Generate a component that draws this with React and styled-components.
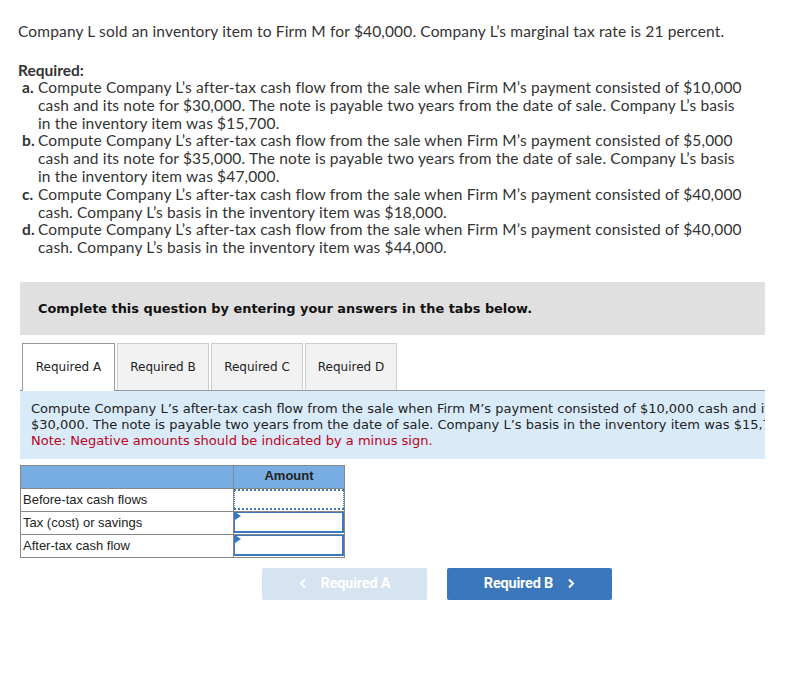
import React from 'react'
import styled, { createGlobalStyle } from 'styled-components'

const GlobalStyle = createGlobalStyle`
  html, body {
    margin: 0;
    padding: 0;
    background: #fff;
  }
  body {
    font-family: 'Lato', 'Open Sans', sans-serif;
    color: #333;
  }
`

const Page = styled.div`
  width: 801px;
  height: 690px;
  padding: 20px 36px 0 18px;
  box-sizing: border-box;
`

const Intro = styled.p`
  margin: 0 0 19px;
  font-size: 15.5px;
  letter-spacing: 0.15px;
  line-height: 22px;
  color: #333;
`

const ReqTitle = styled.div`
  font-size: 15.5px;
  font-weight: 700;
  line-height: 18px;
  color: #333;
`

const ReqList = styled.ol`
  list-style: none;
  margin: 0;
  padding: 0 14px 0 4px;
`

const ReqItem = styled.li`
  display: flex;
  font-size: 15.5px;
  letter-spacing: 0.15px;
  line-height: 17.8px;
  color: #333;
`

const ReqMark = styled.span`
  flex: none;
  width: 16px;
  font-weight: 700;
`

const Banner = styled.div`
  margin: 25px 0 8px 2px;
  height: 53px;
  background: #e0e0e0;
  display: flex;
  align-items: center;
  padding-left: 18px;
  font-family: 'DejaVu Sans', Verdana, sans-serif;
  font-size: 12.9px;
  font-weight: 700;
  color: #111;
`

const Tabs = styled.div`
  display: flex;
  gap: 2px;
  margin-left: 2px;
  padding-left: 2px;
  border-bottom: 1px solid #999;
  align-items: flex-end;
`

const Tab = styled.div`
  width: ${(p) => (p.$active ? 93 : 92)}px;
  height: ${(p) => (p.$active ? 48 : 47)}px;
  box-sizing: border-box;
  border: 1px solid ${(p) => (p.$active ? '#999' : '#ccc')};
  border-bottom: none;
  background: ${(p) => (p.$active ? '#fff' : '#f2f2f2')};
  margin-bottom: ${(p) => (p.$active ? '-1px' : '0')};
  display: flex;
  align-items: center;
  justify-content: center;
  font-family: 'DejaVu Sans', Verdana, sans-serif;
  font-size: 12px;
  color: #222;
`

const Instruction = styled.div`
  margin-left: 2px;
  background: #d9ebf9;
  padding: 10px 0 10px 11px;
  overflow: hidden;
  font-family: 'DejaVu Sans', Verdana, sans-serif;
  font-size: 13px;
  line-height: 16px;
  color: #222;
`

const Line = styled.div`
  white-space: nowrap;
  color: ${(p) => (p.$note ? '#c0001a' : '#222')};
`

const Table = styled.table`
  margin: 6px 0 0 2px;
  border-collapse: collapse;
  font-family: 'Liberation Sans', Arial, sans-serif;
  font-size: 13px;
  color: #222;
`

const HeadCell = styled.th`
  background: #78ade3;
  border: 1px solid #888;
  height: 20px;
  padding: 2px 0 0;
  width: ${(p) => p.$w}px;
  font-weight: 700;
  font-size: 13px;
  color: #222;
  vertical-align: top;
`

const LabelCell = styled.td`
  border: 1px solid #888;
  height: 22px;
  padding: 0 0 0 2px;
  width: 210px;
`

const InputCell = styled.td`
  border: 1px solid #888;
  padding: 0;
  height: 22px;
`

const Field = styled.div`
  height: 21px;
  box-sizing: border-box;
  border: 2px ${(p) => (p.$focus ? 'dotted' : 'solid')} #3b78bd;
  border-width: ${(p) => (p.$focus ? '2px 1px 2px 1px' : '1px 2px 2px 1px')};
  background: #fff;
  position: relative;
`

const Marker = styled.span`
  position: absolute;
  left: 0;
  top: -1px;
  width: 0;
  height: 0;
  border-top: 4px solid transparent;
  border-bottom: 4px solid transparent;
  border-left: 6px solid #3b78bd;
`

const Nav = styled.div`
  display: flex;
  gap: 20px;
  margin: 10px 0 0 244px;
`

const NavButton = styled.div`
  width: 165px;
  height: 32px;
  border-radius: 2px;
  background: ${(p) => (p.$disabled ? '#d6e3f1' : '#3a77bc')};
  color: #fff;
  display: flex;
  align-items: center;
  justify-content: center;
  gap: 14px;
  font-family: 'Roboto', 'Liberation Sans', sans-serif;
  font-weight: 700;
  font-size: 14.5px;
  letter-spacing: -0.2px;
`

const Chevron = ({ dir }) => (
  <svg width="8" height="11" viewBox="0 0 8 11" fill="none">
    <path
      d={dir === 'left' ? 'M6 1.5 L2 5.5 L6 9.5' : 'M2 1.5 L6 5.5 L2 9.5'}
      stroke="#fff"
      strokeWidth="2"
    />
  </svg>
)

const items = [
  ['a.', 'Compute Company L’s after-tax cash flow from the sale when Firm M’s payment consisted of $10,000 cash and its note for $30,000. The note is payable two years from the date of sale. Company L’s basis in the inventory item was $15,700.'],
  ['b.', 'Compute Company L’s after-tax cash flow from the sale when Firm M’s payment consisted of $5,000 cash and its note for $35,000. The note is payable two years from the date of sale. Company L’s basis in the inventory item was $47,000.'],
  ['c.', 'Compute Company L’s after-tax cash flow from the sale when Firm M’s payment consisted of $40,000 cash. Company L’s basis in the inventory item was $18,000.'],
  ['d.', 'Compute Company L’s after-tax cash flow from the sale when Firm M’s payment consisted of $40,000 cash. Company L’s basis in the inventory item was $44,000.'],
]

const rows = ['Before-tax cash flows', 'Tax (cost) or savings', 'After-tax cash flow']

export default function App() {
  return (
    <Page>
      <GlobalStyle />
      <Intro>
        Company L sold an inventory item to Firm M for $40,000. Company L’s marginal tax rate is 21 percent.
      </Intro>
      <ReqTitle>Required:</ReqTitle>
      <ReqList>
        {items.map(([m, t]) => (
          <ReqItem key={m}>
            <ReqMark>{m}</ReqMark>
            <span>{t}</span>
          </ReqItem>
        ))}
      </ReqList>
      <Banner>Complete this question by entering your answers in the tabs below.</Banner>
      <Tabs>
        <Tab $active>Required A</Tab>
        <Tab>Required B</Tab>
        <Tab>Required C</Tab>
        <Tab>Required D</Tab>
      </Tabs>
      <Instruction>
        <Line>
          Compute Company L’s after-tax cash flow from the sale when Firm M’s payment consisted of $10,000 cash and its note for
        </Line>
        <Line>
          $30,000. The note is payable two years from the date of sale. Company L’s basis in the inventory item was $15,700.
        </Line>
        <Line $note>Note: Negative amounts should be indicated by a minus sign.</Line>
      </Instruction>
      <Table>
        <thead>
          <tr>
            <HeadCell $w={212} />
            <HeadCell $w={110}>Amount</HeadCell>
          </tr>
        </thead>
        <tbody>
          {rows.map((r, i) => (
            <tr key={r}>
              <LabelCell>{r}</LabelCell>
              <InputCell>
                <Field $focus={i === 0}>{i > 0 && <Marker />}</Field>
              </InputCell>
            </tr>
          ))}
        </tbody>
      </Table>
      <Nav>
        <NavButton $disabled>
          <Chevron dir="left" />
          Required A
        </NavButton>
        <NavButton>
          Required B
          <Chevron dir="right" />
        </NavButton>
      </Nav>
    </Page>
  )
}
